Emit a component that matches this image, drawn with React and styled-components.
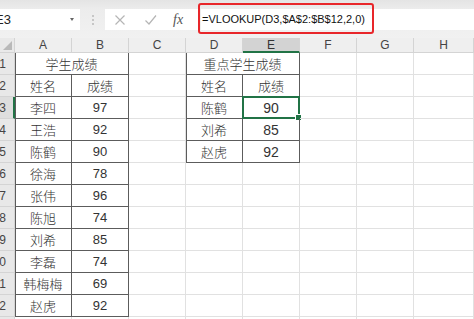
import React from "react";
import styled, { createGlobalStyle, css } from "styled-components";

const GlobalStyle = createGlobalStyle`
  html, body { margin: 0; padding: 0; background: #fff; }
  body { font-family: "Liberation Sans", "Noto Sans CJK SC", sans-serif; }
`;

const COLS = ["A", "B", "C", "D", "E", "F", "G", "H"];

const students = [
  ["李四", 97],
  ["王浩", 92],
  ["陈鹤", 90],
  ["徐海", 78],
  ["张伟", 96],
  ["陈旭", 74],
  ["刘希", 85],
  ["李磊", 74],
  ["韩梅梅", 69],
  ["赵虎", 92],
];

const focus = [
  ["陈鹤", 90],
  ["刘希", 85],
  ["赵虎", 92],
];

export default function App() {
  const rows = [];
  for (let r = 1; r <= 13; r++) {
    const cells = [];
    cells.push(
      <RowHead key="h" $active={r === 3}>
        <span>{r}</span>
      </RowHead>
    );
    for (let c = 0; c < 8; c++) {
      const col = COLS[c];
      // merged titles on row 1
      if (r === 1 && col === "A") {
        cells.push(
          <Cell key={col} $span={2} $dark $left $cjk>
            学生成绩
          </Cell>
        );
        continue;
      }
      if (r === 1 && col === "B") continue;
      if (r === 1 && col === "D") {
        cells.push(
          <Cell key={col} $span={2} $dark $left $cjk>
            重点学生成绩
          </Cell>
        );
        continue;
      }
      if (r === 1 && col === "E") continue;

      let text = "";
      let dark = false;
      let cjk = false;
      if (r >= 2 && r <= 12 && (col === "A" || col === "B")) {
        dark = true;
        if (r === 2) {
          text = col === "A" ? "姓名" : "成绩";
          cjk = true;
        } else {
          const s = students[r - 3];
          text = col === "A" ? s[0] : s[1];
          cjk = col === "A";
        }
      }
      if (r >= 2 && r <= 5 && (col === "D" || col === "E")) {
        dark = true;
        if (r === 2) {
          text = col === "D" ? "姓名" : "成绩";
          cjk = true;
        } else {
          const s = focus[r - 3];
          text = col === "D" ? s[0] : s[1];
          cjk = col === "D";
        }
      }
      const selected = r === 3 && col === "E";
      cells.push(
        <Cell
          key={col}
          $dark={dark}
          $left={dark && (col === "A" || col === "D")}
          $cjk={cjk}
          $big={col === "E" && !cjk}
        >
          {text}
          {selected && (
            <Selection>
              <Handle />
            </Selection>
          )}
        </Cell>
      );
    }
    rows.push(<React.Fragment key={r}>{cells}</React.Fragment>);
  }

  return (
    <>
      <GlobalStyle />
      <Screen>
        <Toolbar>
          <NameBox>
            <span>E3</span>
            <Caret />
          </NameBox>
          <Dots>
            <i />
            <i />
            <i />
          </Dots>
          <FormulaButtons>
            <ToolIcon>
              <svg width="12" height="12" viewBox="0 0 12 12">
                <path d="M1.5 1.5l9 9M10.5 1.5l-9 9" stroke="#b5b5b5" strokeWidth="1.2" fill="none" />
              </svg>
            </ToolIcon>
            <ToolIcon>
              <svg width="13" height="12" viewBox="0 0 13 12">
                <path d="M1.5 6.5l3.5 3.5 7-8.5" stroke="#b5b5b5" strokeWidth="1.2" fill="none" />
              </svg>
            </ToolIcon>
            <Fx>fx</Fx>
          </FormulaButtons>
          <FormulaField>
            <Highlight>=VLOOKUP(D3,$A$2:$B$12,2,0)</Highlight>
          </FormulaField>
        </Toolbar>
        <Sheet>
          <Corner>
            <svg width="9" height="9" viewBox="0 0 9 9">
              <path d="M9 0L9 9L0 9Z" fill="#b9b9b9" />
            </svg>
          </Corner>
          {COLS.map((c) => (
            <ColHead key={c} $active={c === "E"}>
              {c}
            </ColHead>
          ))}
          {rows}
        </Sheet>
      </Screen>
    </>
  );
}

const Screen = styled.div`
  width: 474px;
  height: 319px;
  overflow: hidden;
  background: #fff;
`;

const Toolbar = styled.div`
  height: 38px;
  box-sizing: border-box;
  padding-top: 9px;
  display: flex;
  align-items: flex-start;
  background: linear-gradient(#e4e4e4 0px, #ececec 9px, #f1f1f1 38px);
`;

const NameBox = styled.div`
  width: 80px;
  height: 21px;
  background: #fff;
  display: flex;
  align-items: center;
  justify-content: space-between;
  overflow: hidden;
  font-size: 13px;
  color: #222;
  span {
    margin-left: -5px;
  }
`;

const Caret = styled.div`
  width: 0;
  height: 0;
  margin-right: 6px;
  border-left: 2.5px solid transparent;
  border-right: 2.5px solid transparent;
  border-top: 3px solid #666;
`;

const Dots = styled.div`
  width: 25px;
  height: 21px;
  display: flex;
  flex-direction: column;
  align-items: center;
  justify-content: center;
  gap: 2px;
  i {
    width: 2px;
    height: 2px;
    background: #b8b8b8;
    border-radius: 50%;
  }
`;

const FormulaButtons = styled.div`
  width: 93px;
  height: 21px;
  background: #fff;
  display: flex;
  align-items: center;
  padding-left: 8px;
  box-sizing: border-box;
  gap: 18px;
`;

const ToolIcon = styled.div`
  width: 13px;
  display: flex;
  align-items: center;
  justify-content: center;
`;

const Fx = styled.span`
  font-family: "Liberation Serif", serif;
  font-style: italic;
  font-size: 14px;
  color: #555;
  margin-left: -2px;
`;

const FormulaField = styled.div`
  flex: 1;
  height: 21px;
  margin-left: 3px;
  background: #fff;
  position: relative;
`;

const Highlight = styled.div`
  position: absolute;
  left: -3px;
  top: -6px;
  width: 176px;
  height: 31px;
  box-sizing: border-box;
  border: 2px solid #e8262a;
  border-radius: 3px;
  padding-left: 2px;
  display: flex;
  align-items: center;
  font-size: 11px;
  color: #111;
  white-space: nowrap;
`;

const Sheet = styled.div`
  display: grid;
  grid-template-columns: 15px repeat(7, 57px) 60px;
  grid-template-rows: 15px repeat(13, 22px);
`;

const headBase = css`
  box-sizing: border-box;
  background: #efefef;
  border-right: 1px solid #d4d4d4;
  border-bottom: 1px solid #d4d4d4;
  font-size: 12px;
  color: #444;
  display: flex;
  align-items: center;
  overflow: hidden;
`;

const Corner = styled.div`
  ${headBase};
  background: #e9e9e9;
  align-items: flex-end;
  justify-content: flex-end;
  padding: 0 2px 2px 0;
`;

const ColHead = styled.div`
  ${headBase};
  justify-content: center;
  ${(p) =>
    p.$active &&
    css`
      background: #d3d3d3;
      border-bottom: 2px solid #217346;
      color: #333;
    `}
`;

const RowHead = styled.div`
  ${headBase};
  background: #e8e8e8;
  justify-content: flex-end;
  padding-right: 8px;
  white-space: nowrap;
  ${(p) =>
    p.$active &&
    css`
      background: #dedede;
      border-right: 2px solid #217346;
      padding-right: 7px;
    `}
`;

const Cell = styled.div`
  position: relative;
  box-sizing: border-box;
  grid-column: span ${(p) => p.$span || 1};
  border-right: 1px solid ${(p) => (p.$dark ? "#5c5c5c" : "#e1e1e1")};
  border-bottom: 1px solid ${(p) => (p.$dark ? "#5c5c5c" : "#e1e1e1")};
  box-shadow: ${(p) => (p.$left ? "inset 1px 0 0 #5c5c5c" : "none")};
  display: flex;
  align-items: center;
  justify-content: center;
  font-family: ${(p) =>
    p.$cjk ? '"Noto Sans CJK SC", sans-serif' : '"Liberation Sans", sans-serif'};
  font-size: ${(p) => (p.$big ? "14px" : "13px")};
  font-weight: ${(p) => (p.$cjk ? 300 : 400)};
  color: #333;
  white-space: nowrap;
`;

const Selection = styled.div`
  position: absolute;
  left: -1px;
  top: -1px;
  right: -1px;
  bottom: -1px;
  border: 2px solid #217346;
  pointer-events: none;
`;

const Handle = styled.div`
  position: absolute;
  right: -4px;
  bottom: -4px;
  width: 5px;
  height: 5px;
  background: #217346;
  border: 1px solid #fff;
`;
